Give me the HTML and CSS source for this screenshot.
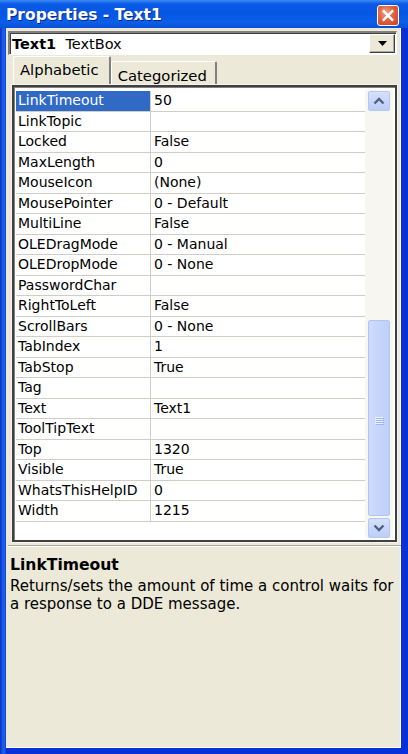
FILE: index.html
```html
<!DOCTYPE html>
<html>
<head>
<meta charset="utf-8">
<link rel="stylesheet" href="styles.css">
</head>
<body>
<div class="window">
  <div class="titlebar">
    <span class="title">Properties - Text1</span>
    <span class="close">
      <svg width="21" height="21" viewBox="0 0 21 21">
        <path d="M6 6 L15 15 M15 6 L6 15" stroke="#fff" stroke-width="2.6" stroke-linecap="square" fill="none"/>
      </svg>
    </span>
  </div>
  <div class="client">
    <div class="combo">
      <span class="obj"><b>Text1</b>&nbsp; TextBox</span>
      <span class="ddbtn">
        <svg width="9" height="5" viewBox="0 0 9 5"><path d="M0 0 H9 L4.5 5 Z" fill="#000"/></svg>
      </span>
    </div>
    <div class="tabs">
      <div class="tab sel">Alphabetic</div>
      <div class="tab">Categorized</div>
    </div>
    <div class="grid">
      <div class="rows">
        <div class="row sel"><span class="name">LinkTimeout</span><span class="val">50</span></div>
        <div class="row"><span class="name">LinkTopic</span><span class="val"></span></div>
        <div class="row"><span class="name">Locked</span><span class="val">False</span></div>
        <div class="row"><span class="name">MaxLength</span><span class="val">0</span></div>
        <div class="row"><span class="name">MouseIcon</span><span class="val">(None)</span></div>
        <div class="row"><span class="name">MousePointer</span><span class="val">0 - Default</span></div>
        <div class="row"><span class="name">MultiLine</span><span class="val">False</span></div>
        <div class="row"><span class="name">OLEDragMode</span><span class="val">0 - Manual</span></div>
        <div class="row"><span class="name">OLEDropMode</span><span class="val">0 - None</span></div>
        <div class="row"><span class="name">PasswordChar</span><span class="val"></span></div>
        <div class="row"><span class="name">RightToLeft</span><span class="val">False</span></div>
        <div class="row"><span class="name">ScrollBars</span><span class="val">0 - None</span></div>
        <div class="row"><span class="name">TabIndex</span><span class="val">1</span></div>
        <div class="row"><span class="name">TabStop</span><span class="val">True</span></div>
        <div class="row"><span class="name">Tag</span><span class="val"></span></div>
        <div class="row"><span class="name">Text</span><span class="val">Text1</span></div>
        <div class="row"><span class="name">ToolTipText</span><span class="val"></span></div>
        <div class="row"><span class="name">Top</span><span class="val">1320</span></div>
        <div class="row"><span class="name">Visible</span><span class="val">True</span></div>
        <div class="row"><span class="name">WhatsThisHelpID</span><span class="val">0</span></div>
        <div class="row"><span class="name">Width</span><span class="val">1215</span></div>
      </div>
      <div class="scroll">
        <div class="sbtn">
          <svg width="12" height="8" viewBox="0 0 12 8"><path d="M1.5 6.5 L6 2 L10.5 6.5" stroke="#4d6185" stroke-width="2.4" fill="none"/></svg>
        </div>
        <div class="thumb">
          <div class="grip"><i></i><i></i><i></i><i></i></div>
        </div>
        <div class="sbtn">
          <svg width="12" height="8" viewBox="0 0 12 8"><path d="M1.5 1.5 L6 6 L10.5 1.5" stroke="#4d6185" stroke-width="2.4" fill="none"/></svg>
        </div>
      </div>
    </div>
    <div class="desc">
      <div class="dname">LinkTimeout</div>
      <div class="dtext">Returns/sets the amount of time a control waits for a response to a DDE message.</div>
    </div>
  </div>
</div>
</body>
</html>
```

FILE: styles.css
```css
* { box-sizing: border-box; }
html, body { margin: 0; padding: 0; }
body {
  width: 408px;
  height: 754px;
  background: #0831d9;
  font-family: "DejaVu Sans", Verdana, sans-serif;
  font-size: 14px;
  color: #000;
  overflow: hidden;
}
.window {
  width: 408px;
  height: 754px;
  display: flex;
  flex-direction: column;
  background: linear-gradient(to right, #0a2fc4 0, #1c5ee8 3px, #1c5ee8 5px, #0831d9 6px);
}
.titlebar {
  height: 28px;
  flex: none;
  display: flex;
  align-items: center;
  justify-content: space-between;
  padding: 0 9px 0 6px;
  background: linear-gradient(to bottom, #3d8bf7 0, #0a5ae6 4px, #0556e4 14px, #0b5fe8 22px, #0a4fd8 28px);
}
.title {
  color: #fff;
  font-weight: bold;
  font-size: 15.5px;
  text-shadow: 1px 1px 0 #0a2a8a;
  padding-top: 2px;
}
.close {
  width: 22px;
  height: 21px;
  border: 1px solid #fff;
  border-radius: 3px;
  background: radial-gradient(circle at 40% 35%, #f2a58e 0, #e0623f 45%, #c8401e 100%);
  display: flex;
  align-items: center;
  justify-content: center;
  margin-top: 2px;
}
.close svg { display: block; }
.client {
  flex: 1;
  margin: 0 7px 6px 6px;
  background: #ece9d8;
  box-shadow: inset -1px -1px 0 #fff;
  display: flex;
  flex-direction: column;
  padding: 3px 4px 2px 2px;
}
.combo {
  height: 24px;
  flex: none;
  background: #fff;
  border-top: 2px solid #808080;
  border-left: 2px solid #808080;
  border-right: 1px solid #fff;
  border-bottom: 1px solid #fff;
  box-shadow: inset 1px 1px 0 #404040;
  display: flex;
  align-items: center;
  justify-content: space-between;
  padding: 0 1px 0 2px;
}
.obj { padding-top: 1px; font-size: 14.5px; }
.obj b { font-weight: bold; }
.ddbtn {
  width: 26px;
  height: 19px;
  background: #ece9d8;
  border-top: 1px solid #fff;
  border-left: 1px solid #fff;
  border-right: 1px solid #404040;
  border-bottom: 1px solid #404040;
  box-shadow: inset -1px -1px 0 #aca899;
  display: flex;
  align-items: center;
  justify-content: center;
}
.tabs {
  height: 28px;
  flex: none;
  margin-top: 2px;
  display: flex;
  align-items: flex-end;
  padding-left: 5px;
}
.tab {
  height: 24px;
  padding: 3px 8px 0 6px;
  border-left: 1px solid #fff;
  border-top: 1px solid #fff;
  border-right: 2px solid #808080;
  border-radius: 2px 2px 0 0;
  display: flex;
  align-items: center;
  font-size: 14.8px;
}
.tab.sel {
  height: 29px;
  padding: 0 10px 3px 6px;
}
.grid {
  flex: none;
  height: 457px;
  margin-left: 4px;
  border: 2px solid #404040;
  box-shadow: inset 1px 1px 0 #808080, 0 0 0 1px #f5f4ee;
  background: #fff;
  display: flex;
  padding: 3px 2px 2px 2px;
}
.rows {
  flex: 1;
  display: flex;
  flex-direction: column;
  padding-top: 1px;
}
.row {
  height: 20.5px;
  flex: none;
  display: flex;
  border-bottom: 1px solid #d0cdc4;
  line-height: 19.5px;
}
.name {
  width: 135px;
  flex: none;
  padding-left: 2px;
  border-right: 1px solid #d0cdc4;
  white-space: nowrap;
  overflow: hidden;
}
.val {
  flex: 1;
  padding-left: 3px;
  white-space: nowrap;
}
.row.sel .name {
  background: #316ac5;
  color: #fff;
}
.scroll {
  width: 28px;
  flex: none;
  background: #f7f6f1;
  display: flex;
  flex-direction: column;
  padding: 1px 3px 0 3px;
}
.sbtn {
  height: 20px;
  flex: none;
  border: 1px solid #b6c7ee;
  border-radius: 2px;
  background: linear-gradient(to bottom, #d5e0fb, #bccdf8);
  display: flex;
  align-items: center;
  justify-content: center;
}
.thumb {
  margin-top: auto;
  height: 196px;
  flex: none;
  border: 1px solid #b2c5f2;
  border-radius: 2px;
  background: linear-gradient(to right, #cfdcfa, #c5d5fb 50%, #bfd0f7);
  margin-bottom: 2px;
  display: flex;
  align-items: center;
  justify-content: center;
}
.grip {
  display: flex;
  flex-direction: column;
  gap: 1px;
  margin-top: 4px;
}
.grip i {
  display: block;
  width: 8px;
  height: 1px;
  background: #eef3fe;
  box-shadow: 1px 1px 0 #9cb4e8;
}
.desc {
  flex: 1;
  margin-top: 3px;
  margin-right: -4px;
  border-top: 1px solid #aca899;
  box-shadow: inset 0 1px 0 #fff;
  padding: 10px 2px 0 2px;
  font-size: 15px;
}
.dname {
  font-weight: bold;
  font-size: 15.6px;
  line-height: 19px;
  margin-bottom: 3px;
}
.dtext {
  line-height: 17.5px;
  font-size: 15px;
}
```
